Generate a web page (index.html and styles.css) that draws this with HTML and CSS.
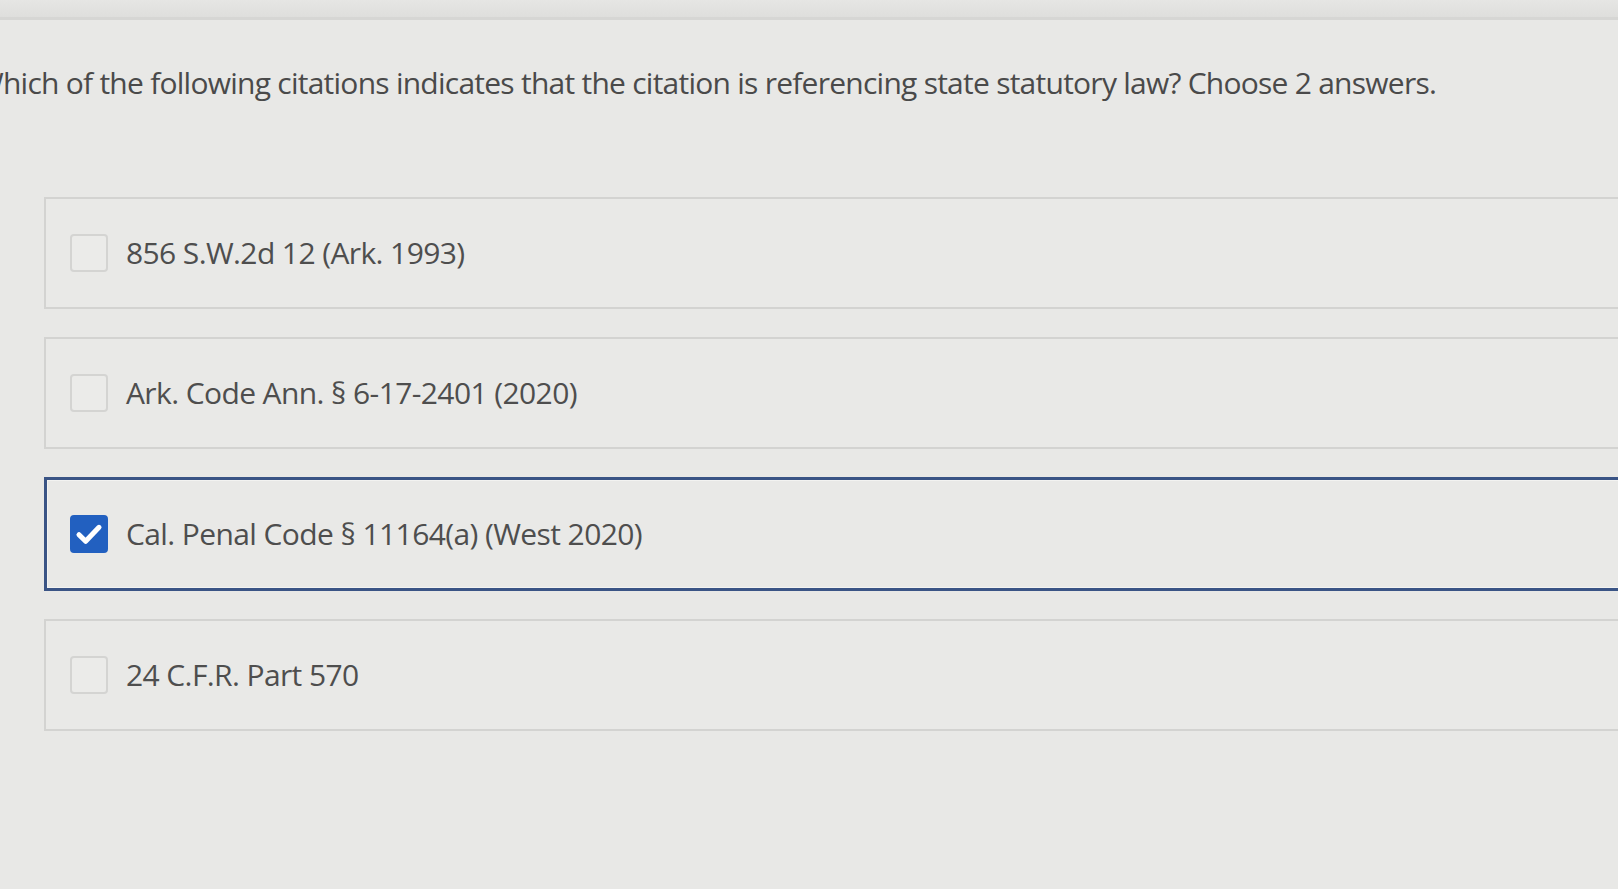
FILE: index.html
```html
<!DOCTYPE html>
<html lang="en">
<head>
<meta charset="utf-8">
<title>Question</title>
<link rel="stylesheet" href="styles.css">
</head>
<body>
<div class="topbar"></div>
<main class="page">
  <h1 class="question">Which of the following citations indicates that the citation is referencing state statutory law? Choose 2 answers.</h1>
  <ul class="options">
    <li class="option">
      <span class="box"></span>
      <span class="label">856 S.W.2d 12 (Ark. 1993)</span>
    </li>
    <li class="option">
      <span class="box"></span>
      <span class="label">Ark. Code Ann. § 6-17-2401 (2020)</span>
    </li>
    <li class="option selected">
      <span class="box checked">
        <svg viewBox="0 0 24 24" width="32" height="32"><path d="M4.5 12.5l5 5L19.5 7" fill="none" stroke="#fff" stroke-width="3.8" stroke-linecap="round" stroke-linejoin="round"/></svg>
      </span>
      <span class="label">Cal. Penal Code § 11164(a) (West 2020)</span>
    </li>
    <li class="option">
      <span class="box"></span>
      <span class="label">24 C.F.R. Part 570</span>
    </li>
  </ul>
</main>
</body>
</html>
```
FILE: styles.css
```css
html, body {
  margin: 0;
  padding: 0;
  background: #e8e8e6;
  overflow: hidden;
}
body {
  width: 1618px;
  height: 889px;
  font-family: "Open Sans", "Liberation Sans", sans-serif;
  color: #4e4e4e;
}
.topbar {
  height: 17px;
  background: linear-gradient(#e6e6e4, #dededc);
  border-bottom: 3px solid #d6d6d4;
}
.question {
  margin: 40px 0 0 -24px;
  font-size: 30px;
  font-weight: 400;
  line-height: 46px;
  white-space: nowrap;
  color: #4a4a4a;
  letter-spacing: -0.75px;
}
.options {
  list-style: none;
  margin: 91px -40px 0 44px;
  padding: 0;
  display: flex;
  flex-direction: column;
  gap: 28px;
}
.option {
  height: 108px;
  border: 2px solid #d3d3d1;
  background: #e9e9e7;
  display: flex;
  align-items: center;
  padding-left: 24px;
  gap: 18px;
}
.option.selected {
  border: 3px solid #3a5485;
  padding-left: 23px;
  height: 108px;
  box-shadow: inset 0 0 0 1px #f3f3f1;
}
.box {
  width: 34px;
  height: 34px;
  border: 2px solid #d4d4d2;
  border-radius: 4px;
  background: #ebebe9;
  flex: none;
  display: flex;
  align-items: center;
  justify-content: center;
}
.box.checked {
  background: #2260c0;
  border-color: #2260c0;
}
.label {
  font-size: 30px;
  line-height: 38px;
  color: #4e4e4e;
  letter-spacing: -0.6px;
}
```
